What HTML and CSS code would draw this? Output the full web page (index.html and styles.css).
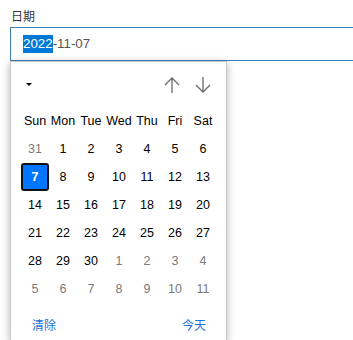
FILE: index.html
```html
<!DOCTYPE html>
<html>
<head>
<title>日期</title>
<link rel="stylesheet" href="styles.css">
</head>
<body>

<div class="field">
	<label class="label">日期</label>
	<div class="input"><span class="sel">2022</span>-11-07</div>
</div>

<div class="picker">
	<div class="head">
		<span class="caret"></span>
		<span class="spacer"></span>
		<svg class="arrow" width="16" height="18" viewBox="0 0 16 18"><path d="M8 17V2M1 9L8 2L15 9" fill="none" stroke="#6a6a6a" stroke-width="1.3"/></svg>
		<svg class="arrow" width="16" height="18" viewBox="0 0 16 18"><path d="M8 1V16M1 9L8 16L15 9" fill="none" stroke="#6a6a6a" stroke-width="1.3"/></svg>
	</div>
	<div class="grid">
		<div class="wd">Sun</div><div class="wd">Mon</div><div class="wd">Tue</div><div class="wd">Wed</div><div class="wd">Thu</div><div class="wd">Fri</div><div class="wd">Sat</div>
		<div class="day other">31</div><div class="day">1</div><div class="day">2</div><div class="day">3</div><div class="day">4</div><div class="day">5</div><div class="day">6</div>
		<div class="day cur">7</div><div class="day">8</div><div class="day">9</div><div class="day">10</div><div class="day">11</div><div class="day">12</div><div class="day">13</div>
		<div class="day">14</div><div class="day">15</div><div class="day">16</div><div class="day">17</div><div class="day">18</div><div class="day">19</div><div class="day">20</div>
		<div class="day">21</div><div class="day">22</div><div class="day">23</div><div class="day">24</div><div class="day">25</div><div class="day">26</div><div class="day">27</div>
		<div class="day">28</div><div class="day">29</div><div class="day">30</div><div class="day other">1</div><div class="day other">2</div><div class="day other">3</div><div class="day other">4</div>
		<div class="day other">5</div><div class="day other">6</div><div class="day other">7</div><div class="day other">8</div><div class="day other">9</div><div class="day other">10</div><div class="day other">11</div>
	</div>
	<div class="foot">
		<a class="link">清除</a>
		<a class="link">今天</a>
	</div>
</div>

</body>
</html>
```

FILE: styles.css
```css
body{
	margin:0;
	padding:10px 0 0 10px;
	overflow:hidden;
	background:#fff;
	font-family:"Liberation Sans", Arial, "Noto Sans CJK SC", sans-serif;
}
.field{
	width:360px;
}
.label{
	display:block;
	font-size:12px;
	line-height:15px;
	color:#333;
	padding-left:1px;
	margin-bottom:2px;
}
.input{
	box-sizing:border-box;
	height:34px;
	border:1px solid #3d80b8;
	padding:0 12px;
	font-size:13.33px;
	line-height:32px;
	color:#555;
}
.sel{
	background:#0078d7;
	color:#fff;
	display:inline-block;
	line-height:18px;
}
.picker{
	position:absolute;
	left:10px;
	top:61px;
	width:215px;
	height:278px;
	background:#fff;
	border:1px solid #c8c8c8;
	box-shadow:0 2px 8px rgba(0,0,0,.3);
}
.head{
	display:flex;
	align-items:center;
	height:45px;
	padding:0 15px 0 15px;
}
.caret{
	width:0;
	height:0;
	border-left:3px solid transparent;
	border-right:3px solid transparent;
	border-top:3px solid #000;
}
.spacer{
	flex:1;
}
.arrow{
	margin-left:15px;
}
.grid{
	display:grid;
	grid-template-columns:repeat(7, 28px);
	grid-auto-rows:28px;
	margin-left:10px;
	font-size:12.5px;
	color:#000;
}
.wd, .day{
	display:flex;
	align-items:center;
	justify-content:center;
}
.other{
	color:#7a7a7a;
}
.cur{
	box-sizing:border-box;
	background:#0075ff;
	border:2px solid #111;
	border-radius:3px;
	color:#fff;
	font-weight:bold;
}
.foot{
	display:flex;
	justify-content:space-between;
	align-items:center;
	height:42px;
	padding:0 20px 0 21px;
}
.link{
	font-size:12px;
	color:#1a73d9;
}
```
